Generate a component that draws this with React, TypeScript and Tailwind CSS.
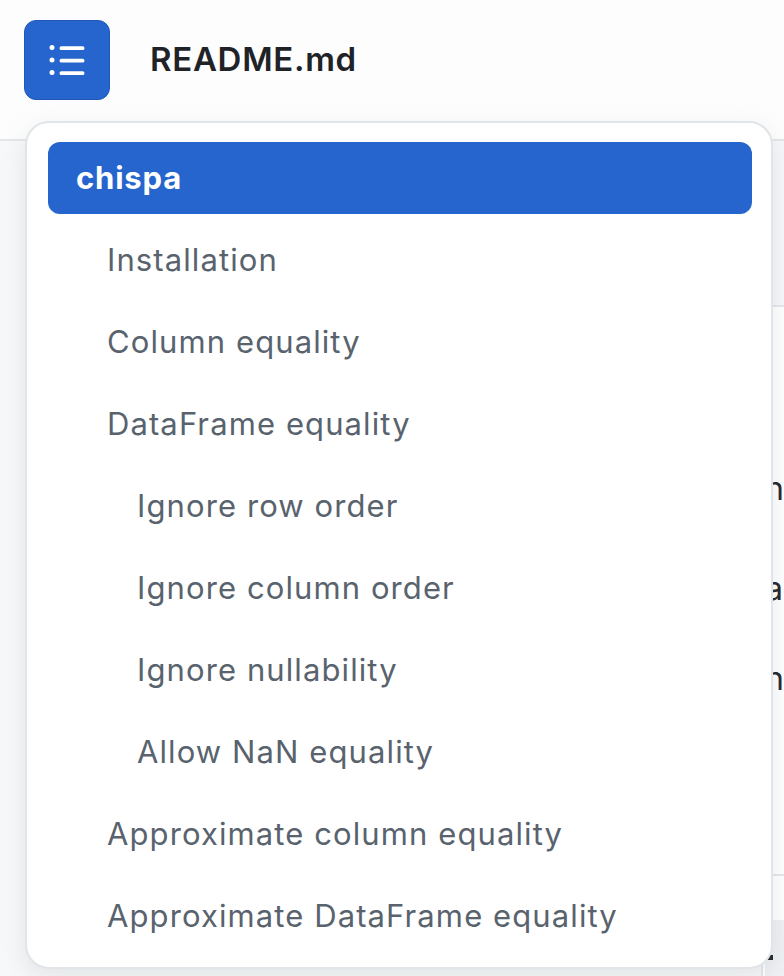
import React from "react";

const items: { label: string; level: number; active?: boolean }[] = [
  { label: "chispa", level: 0, active: true },
  { label: "Installation", level: 1 },
  { label: "Column equality", level: 1 },
  { label: "DataFrame equality", level: 1 },
  { label: "Ignore row order", level: 2 },
  { label: "Ignore column order", level: 2 },
  { label: "Ignore nullability", level: 2 },
  { label: "Allow NaN equality", level: 2 },
  { label: "Approximate column equality", level: 1 },
  { label: "Approximate DataFrame equality", level: 1 },
];

function ListIcon() {
  return (
    <svg width="40" height="40" viewBox="0 0 16 16" fill="white">
      <path d="M5.75 2.5h8.5a.75.75 0 0 1 0 1.5h-8.5a.75.75 0 0 1 0-1.5Zm0 5h8.5a.75.75 0 0 1 0 1.5h-8.5a.75.75 0 0 1 0-1.5Zm0 5h8.5a.75.75 0 0 1 0 1.5h-8.5a.75.75 0 0 1 0-1.5ZM2 14a1 1 0 1 1 0-2 1 1 0 0 1 0 2Zm1-6a1 1 0 1 1-2 0 1 1 0 0 1 2 0ZM2 4a1 1 0 1 1 0-2 1 1 0 0 1 0 2Z" />
    </svg>
  );
}

export default function App() {
  return (
    <div className="relative w-[784px] h-[976px] overflow-hidden bg-[#f6f8fa] font-['Inter','Noto_Sans',sans-serif]">
      {/* header */}
      <div className="h-[141px] bg-[#fdfdfd] border-b-2 border-[#e4e7ea] flex items-start pl-[24px] pt-[20px]">
        <div className="w-[86px] h-[80px] rounded-[12px] bg-[#2565cd] border border-[#2158b8] flex items-center justify-center">
          <ListIcon />
        </div>
        <div className="ml-[40px] mt-[19px] text-[33px] leading-[40px] font-semibold text-[#1f2328] tracking-[0.7px]">
          README.md
        </div>
      </div>

      {/* background content */}
      <div className="flex h-[835px]">
        <div className="w-[771px] bg-[#f7f8f9]" />
        <div className="flex-1 flex flex-col border-l-2 border-[#e4e7ea] bg-[#f6f8fa]">
          <div className="h-[166px] border-b-2 border-[#e4e7ea]" />
          <div className="bg-white flex-1 flex flex-col text-[32px] text-[#1f2328] pl-[2px]">
            <div className="h-[198px] flex items-end leading-none">n</div>
            <div className="h-[100px] flex items-end leading-none">a</div>
            <div className="h-[90px] flex items-end leading-none">h</div>
            <div className="flex-1 border-b-2 border-[#e4e7ea]" />
            <div className="h-[44px]" />
            <div className="h-[56px] bg-[#eff1f3] relative">
              <div className="absolute left-[3px] top-[35px] w-[5px] h-[5px] bg-[#1f2328]" />
            </div>
          </div>
        </div>
      </div>

      {/* dropdown menu */}
      <div className="absolute left-[25px] top-[121px] w-[748px] h-[848px] bg-white rounded-[24px] border-2 border-[#e1e4e8] shadow-[0_8px_24px_rgba(140,149,159,0.2)] pl-[21px] pr-[19px] pt-[19px]">
        <div className="flex flex-col gap-[10px]">
          {items.map((it) => (
            <div
              key={it.label}
              className={
                it.active
                  ? "h-[72px] rounded-[12px] bg-[#2565cd] flex items-center pl-[28px] text-white font-bold text-[31px] tracking-[0.8px]"
                  : it.level === 1
                  ? "h-[72px] flex items-center pl-[59px] text-[#59636e] text-[31px] tracking-[1.1px]"
                  : "h-[72px] flex items-center pl-[89px] text-[#59636e] text-[31px] tracking-[1.1px]"
              }
            >
              {it.label}
            </div>
          ))}
        </div>
      </div>
    </div>
  );
}
